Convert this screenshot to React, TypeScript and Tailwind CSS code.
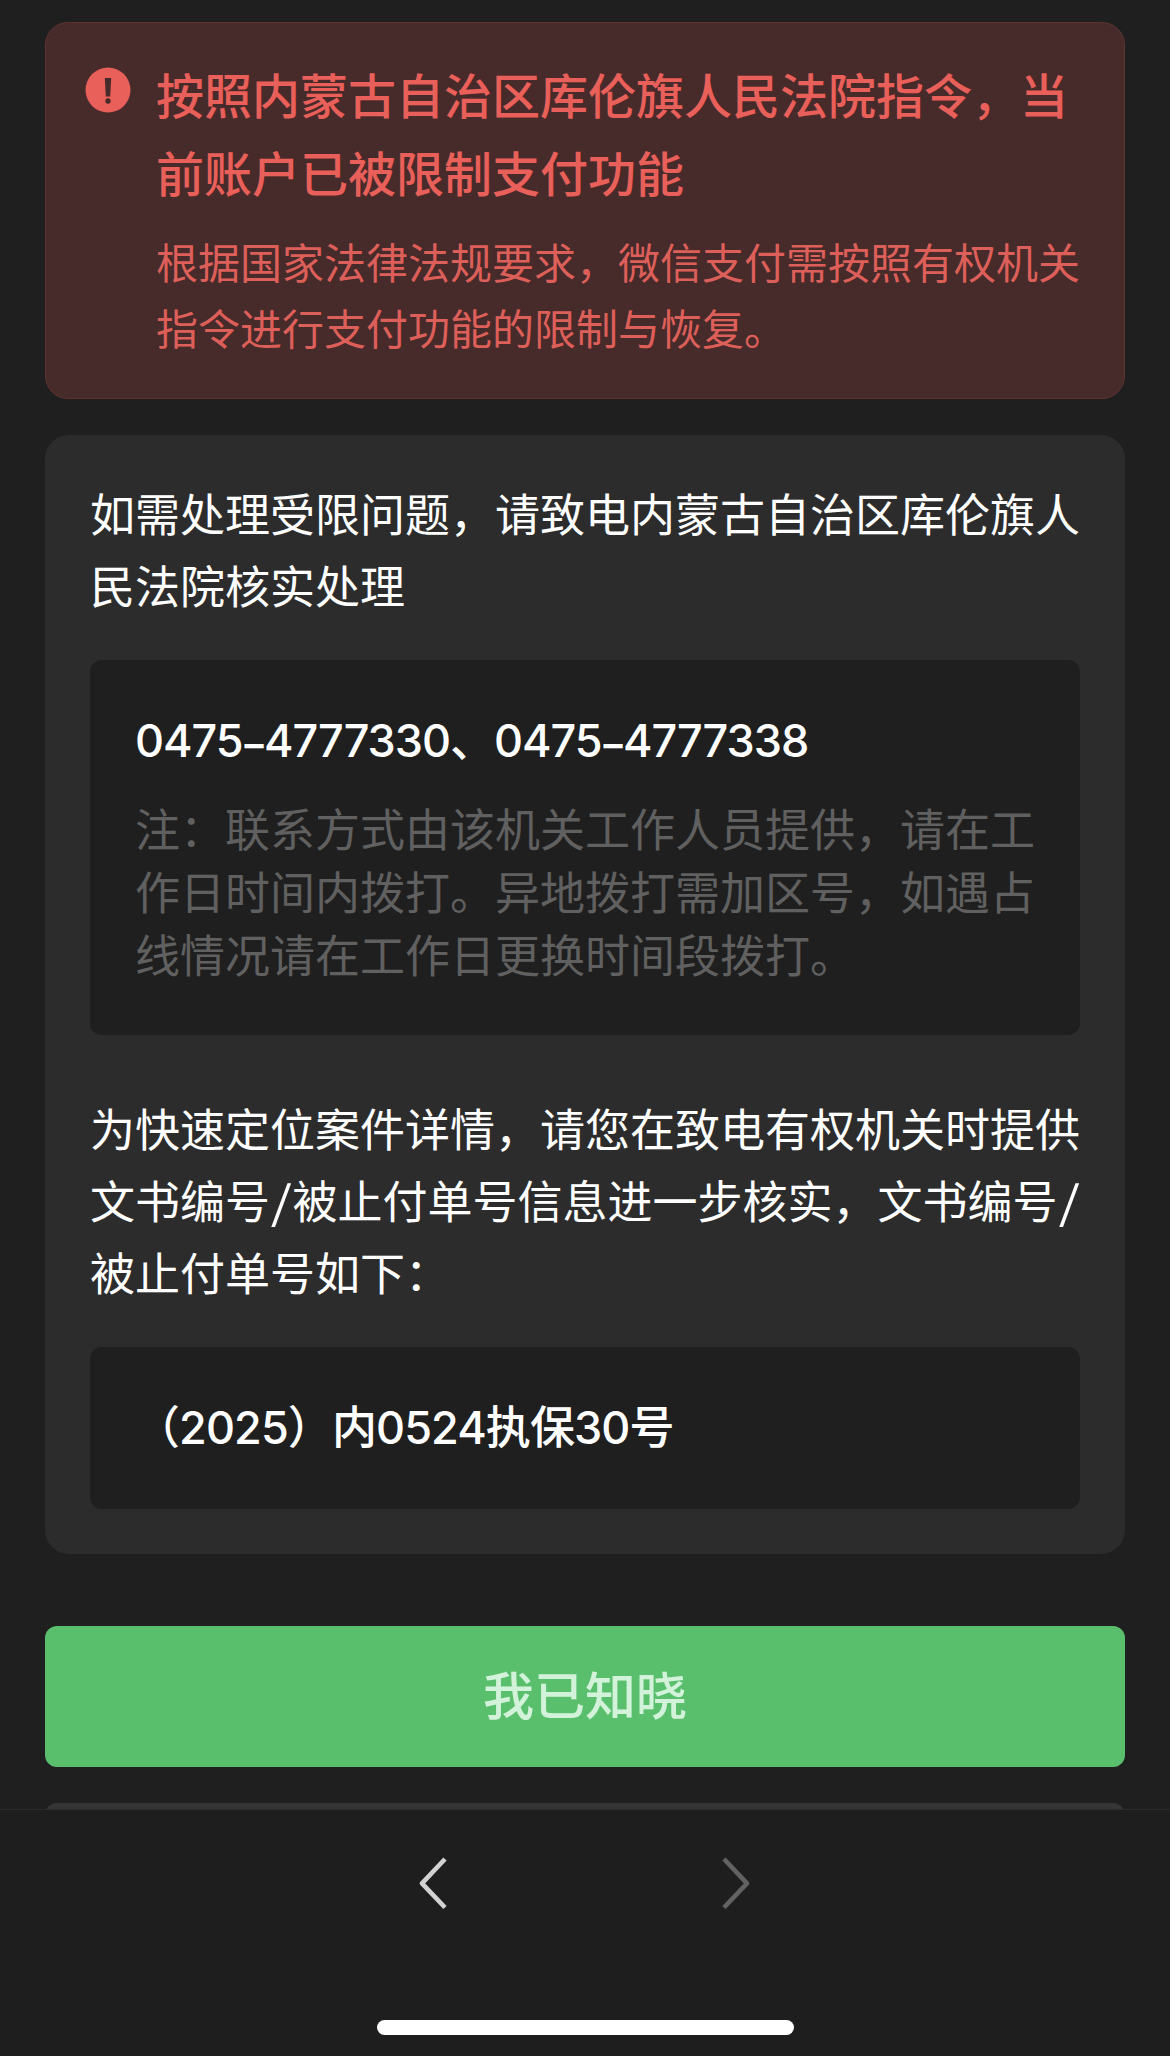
import { Fragment, type ReactNode } from "react";

type TextLinesProps = {
  lines: string[];
  className?: string;
};

function Slash() {
  return (
    <span className="inline-block w-[22.5px] scale-x-120 text-center font-['Noto_Sans_CJK_SC',sans-serif] leading-none">
      /
    </span>
  );
}

function TextLines({ lines, className = "" }: TextLinesProps) {
  return (
    <p className={className}>
      {lines.map((line) => (
        <span key={line} className="block whitespace-nowrap">
          {line.split("/").map((part, index) => (
            <Fragment key={index}>
              {index > 0 ? <Slash /> : null}
              {part}
            </Fragment>
          ))}
        </span>
      ))}
    </p>
  );
}

function PhoneNumber({ area, local }: { area: string; local: string }) {
  return (
    <>
      {area}
      <span className="relative top-[3px] inline-block scale-x-85 leading-none">–</span>
      {local}
    </>
  );
}

function InfoBox({ children, className = "" }: { children: ReactNode; className?: string }) {
  return <div className={`rounded-xl bg-[#1f1f1f] px-[45px] ${className}`}>{children}</div>;
}

function AlertIcon() {
  return (
    <svg width="46" height="46" viewBox="0 0 46 46" className="mt-[44px] shrink-0">
      <circle cx="23" cy="23" r="22.5" fill="#e95f59" />
      <path d="M19.8 11h6.4l-1 18.5h-4.4z" fill="#472a2a" />
      <circle cx="23" cy="34" r="2.7" fill="#472a2a" />
    </svg>
  );
}

function AlertCard() {
  return (
    <section className="flex h-[377px] rounded-[23px] border border-[#603333] bg-[#472a2a] pl-[39px] text-[#e95f59]">
      <AlertIcon />
      <div className="ml-[25px] pt-[35px]">
        <TextLines
          className="text-5xl leading-[78px] font-medium"
          lines={["按照内蒙古自治区库伦旗人民法院指令，当", "前账户已被限制支付功能"]}
        />
        <TextLines
          className="mt-[17px] text-[42px] leading-[66px] text-[#dd5f59]"
          lines={["根据国家法律法规要求，微信支付需按照有权机关", "指令进行支付功能的限制与恢复。"]}
        />
      </div>
    </section>
  );
}

function DetailCard() {
  return (
    <section className="mt-9 h-[1119px] rounded-3xl bg-[#2c2c2c] px-[45px] pt-[45px] text-[45px] text-white">
      <TextLines
        className="leading-[72px]"
        lines={["如需处理受限问题，请致电内蒙古自治区库伦旗人", "民法院核实处理"]}
      />
      <InfoBox className="mt-9 h-[375px] pt-[45px]">
        <p className="h-[72px] leading-[72px] font-medium tracking-[-1.03px] whitespace-nowrap">
          <PhoneNumber area="0475" local="4777330" />、<PhoneNumber area="0475" local="4777338" />
        </p>
        <TextLines
          className="mt-[22px] leading-[63px] text-[#606060]"
          lines={[
            "注：联系方式由该机关工作人员提供，请在工",
            "作日时间内拨打。异地拨打需加区号，如遇占",
            "线情况请在工作日更换时间段拨打。",
          ]}
        />
      </InfoBox>
      <TextLines
        className="mt-[60px] leading-[72px]"
        lines={[
          "为快速定位案件详情，请您在致电有权机关时提供",
          "文书编号/被止付单号信息进一步核实，文书编号/",
          "被止付单号如下：",
        ]}
      />
      <InfoBox className="mt-9 h-[162px] pt-[45px]">
        <p className="leading-[72px] font-medium tracking-[-0.9px] whitespace-nowrap">（2025）内0524执保30号</p>
      </InfoBox>
    </section>
  );
}

function BottomBar() {
  return (
    <nav className="flex h-[247px] flex-col items-center border-t border-[#2b2b2b] bg-[#1e1e1e]">
      <div className="mt-[47px] flex w-[332px] justify-between">
        <button type="button" aria-label="后退">
          <svg width="29" height="53" viewBox="0 0 29 53" fill="none" stroke="#d2d2d2" strokeWidth="4.6">
            <path d="M26 2 3 26.3l23 24.2" strokeLinejoin="round" />
          </svg>
        </button>
        <button type="button" aria-label="前进">
          <svg width="29" height="53" viewBox="0 0 29 53" fill="none" stroke="#626262" strokeWidth="4.6">
            <path d="m2 2 23 24.3L2 50.5" strokeLinejoin="round" />
          </svg>
        </button>
      </div>
      <div className="mt-[110px] h-[15px] w-[417px] rounded-full bg-white" />
    </nav>
  );
}

export default function App() {
  return (
    <div className="flex h-[2056px] w-[1170px] flex-col overflow-hidden bg-[#1f1f1f] font-[Inter,'Noto_Sans_CJK_SC',sans-serif]">
      <main className="h-[1809px] overflow-hidden px-[45px] pt-[22px]">
        <AlertCard />
        <DetailCard />
        <button
          type="button"
          className="mt-[72px] flex h-[141px] w-full items-center justify-center rounded-xl bg-[#5abf6d] pt-0.5 text-[51px] font-medium text-[#d2f2d9]"
        >
          我已知晓
        </button>
        <div className="mt-9 h-[141px] rounded-xl bg-[#353535]" />
      </main>
      <BottomBar />
    </div>
  );
}
